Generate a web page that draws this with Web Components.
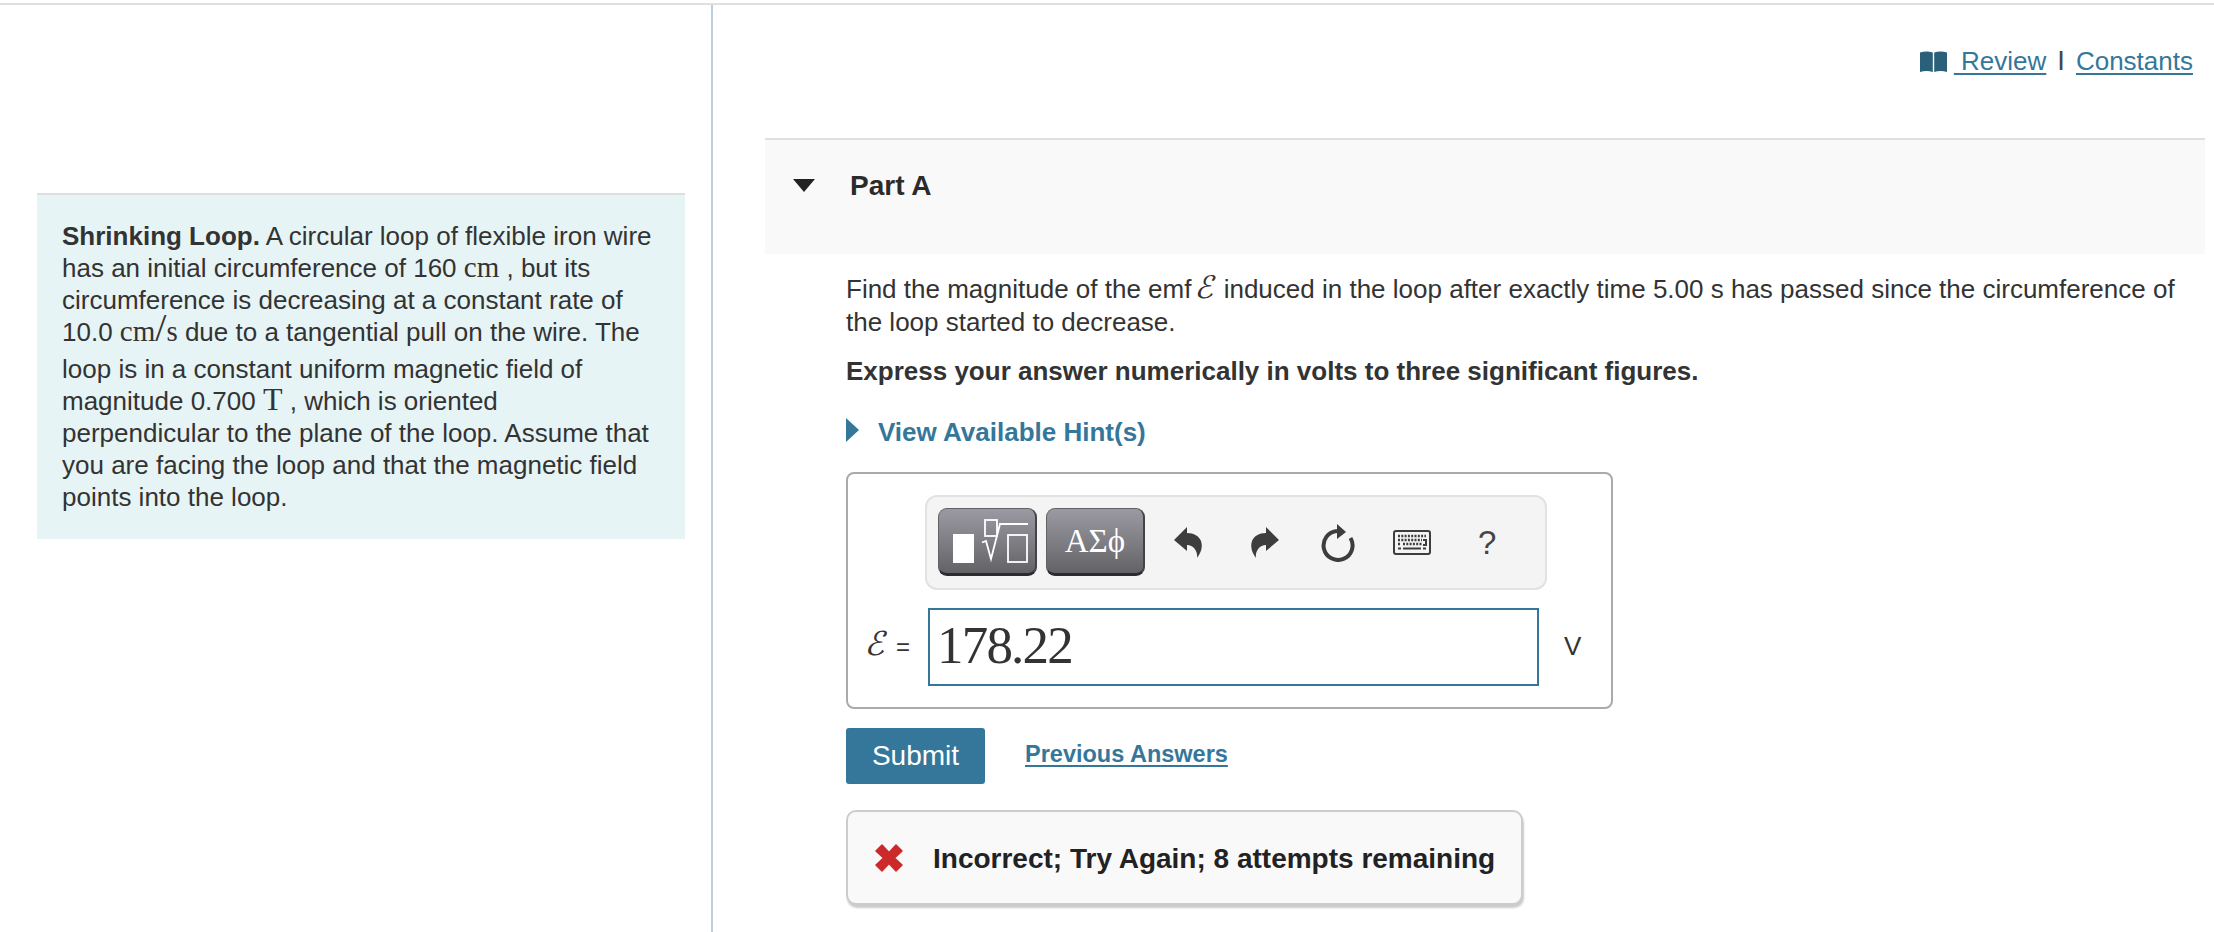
<!DOCTYPE html>
<html><head><meta charset="utf-8"><style>
html,body{margin:0;padding:0;background:#fff}
body{font-family:"Liberation Sans",Arial,sans-serif;font-size:26px;line-height:32.5px;color:#333;height:932px;overflow:hidden}
</style></head><body>
<mp-app>
  <mp-intro slot="left"><b>Shrinking Loop.</b> A circular loop of flexible iron wire has an initial circumference of 160 <mp-math>cm</mp-math> , but its circumference is decreasing at a constant rate of 10.0 <mp-math>cm<mp-slash>/</mp-slash>s</mp-math> due to a tangential pull on the wire. The loop is in a constant uniform magnetic field of magnitude 0.700 <mp-math big>T</mp-math> , which is oriented perpendicular to the plane of the loop. Assume that you are facing the loop and that the magnetic field points into the loop.</mp-intro>
  <mp-links slot="right"></mp-links>
  <mp-part-header slot="right">Part A</mp-part-header>
  <mp-part-body slot="right">
    <mp-para>Find the magnitude of the emf <mp-emf></mp-emf> induced in the loop after exactly time 5.00 s has passed since the circumference of the loop started to decrease.</mp-para>
    <mp-para strong>Express your answer numerically in volts to three significant figures.</mp-para>
    <mp-hint>View Available Hint(s)</mp-hint>
    <mp-answer value="178.22" unit="V"></mp-answer>
    <mp-actions></mp-actions>
    <mp-feedback>Incorrect; Try Again; 8 attempts remaining</mp-feedback>
  </mp-part-body>
</mp-app>
<script>
const def=(name,html,init)=>customElements.define(name,class extends HTMLElement{
  constructor(){super();this.attachShadow({mode:'open'}).innerHTML=html;}
  connectedCallback(){if(init)init(this,this.shadowRoot);}
});
const BLUE='#34779b';
def('mp-app',`<style>
:host{display:block;height:932px;box-sizing:border-box;padding-top:3px}
.wrap{display:grid;grid-template-columns:711px 1fr;height:100%;border-top:2px solid #e0e0e0;box-sizing:border-box}
.l{padding:188px 0 0 37px;box-sizing:border-box}
.r{border-left:2px solid #bccede;padding:0 9px 0 52px;min-width:0}
</style><div class="wrap"><div class="l"><slot name="left"></slot></div><div class="r"><slot name="right"></slot></div></div>`);
def('mp-intro',`<style>
:host{display:block;width:648px;box-sizing:border-box;background:#e7f4f6;border-top:2px solid #dcdfe0;padding:25px 26px 26px 25px;line-height:32px}
</style><slot></slot>`);
def('mp-math',`<style>
:host{display:inline;font-family:"Liberation Serif","DejaVu Serif",serif;font-size:29px;line-height:0}
:host([big]){font-size:32px}
</style><slot></slot>`);
def('mp-slash',`<style>
:host{display:inline;font-size:40px;line-height:0;font-weight:200}
.gap{display:inline-block;height:0;width:0;vertical-align:-12px}
</style><slot></slot><span class="gap"></span>`);
def('mp-emf',`<style>
:host{display:inline-block;font-family:"DejaVu Serif","DejaVu Sans",serif;font-size:31px;line-height:0;transform:skewX(-14deg);margin:0 1px 0 -2px}
</style>ℰ`);
def('mp-links',`<style>
:host{display:block;height:133px;box-sizing:border-box;padding:38px 12px 0 0;text-align:right;font-size:26px}
a{color:${BLUE};text-decoration:underline;text-underline-offset:3px}
svg{vertical-align:-2px;margin-right:7px}
.sep{font-size:20px;margin:0 12px;vertical-align:4px;color:#444;font-weight:bold}
</style><svg width="27" height="21" viewBox="0 0 27 21"><path d="M0 1.500C4 0 9 0 12.800 1.500V21C9 19.600 4 19.600 0 21Z" fill="#2a6079"/><path d="M27 1.500C23 0 18 0 14.200 1.500V21C18 19.600 23 19.600 27 21Z" fill="#2a6079"/></svg><a href="#">&nbsp;Review</a><span class="sep">|</span><a href="#">Constants</a>`);
def('mp-part-header',`<style>
:host{display:flex;align-items:flex-start;height:116px;box-sizing:border-box;background:#f9f9f9;border-top:2px solid #e0e0e0;font-weight:bold;font-size:28px;color:#2b2b2b;padding:30px 0 0 28px}
svg{margin:9px 35px 0 0;flex:none}
</style><svg width="22" height="13" viewBox="0 0 22 13"><path d="M0 0H22L11 13Z" fill="#222"/></svg><slot></slot>`);
def('mp-part-body',`<style>
:host{display:block;padding:19px 0 0 81px}
</style><slot></slot>`);
def('mp-para',`<style>
:host{display:block;margin-bottom:17px}
:host([strong]){font-weight:bold;margin-bottom:29px}
</style><slot></slot>`);
def('mp-hint',`<style>
:host{display:flex;align-items:center;color:${BLUE};font-weight:bold;height:32px;margin-bottom:23px}
svg{margin-right:19px;margin-top:-6px}
</style><svg width="13" height="24" viewBox="0 0 13 24"><path d="M0 0L13 12L0 24Z" fill="${BLUE}"/></svg><slot></slot>`);
def('mp-tool-button',`<style>
:host{display:flex;align-items:center;justify-content:center;width:99px;height:68px;box-sizing:border-box;border-radius:9px;border:1px solid #636367;border-bottom:3px solid #2c2c30;border-right:2px solid #444448;background:linear-gradient(#9b9aa3,#636366);color:#fff}
</style><slot></slot>`);
def('mp-answer',`<style>
:host{display:block;width:767px;height:237px;box-sizing:border-box;border:2px solid #aaa;border-radius:8px;padding:21px 0 0 0}
.tb{display:flex;align-items:center;width:622px;height:95px;box-sizing:border-box;margin-left:77px;background:#f4f4f4;border:2px solid #e2e2e2;border-radius:12px;padding:0 0 0 11px}
.sym{font-family:"Liberation Serif",serif;font-size:33px}
.btns{display:flex;gap:9px}
.tb>svg{flex:none;display:block}
.row{display:flex;align-items:center;margin-top:18px}
.lab{width:80px;box-sizing:border-box;text-align:right;padding-right:18px;white-space:nowrap;font-size:24px;line-height:1}
.lab i{display:inline-block;font-style:normal;font-family:"DejaVu Serif","DejaVu Sans",serif;font-size:33px;margin-right:2px;transform:skewX(-14deg);line-height:0}
.in{width:611px;height:78px;box-sizing:border-box;border:2px solid ${BLUE};font-family:"Liberation Serif",serif;font-size:53px;letter-spacing:-1.800px;line-height:70px;color:#333;padding-left:7px}
.unit{margin-left:25px}
.q{font-size:33px;color:#444;line-height:1;margin-left:47px}
</style>
<div class="tb"><div class="btns">
<mp-tool-button><svg width="96" height="64" viewBox="1 1 96 64" style="display:block"><rect x="15" y="26" width="21" height="29" fill="#fff"/><g fill="none" stroke="#fff" stroke-width="1.800"><rect x="47" y="12" width="12" height="16"/><path d="M44 34.500l4-1.500 5 18 9-35h28"/><rect x="70" y="27" width="19" height="27"/></g></svg></mp-tool-button>
<mp-tool-button><span class="sym">ΑΣϕ</span></mp-tool-button></div>
<svg style="margin-left:29px" width="28" height="31" viewBox="0 0 28 31"><path d="M13 0L0 13L13 24V18C20 18 24 25 23 31C27 26 29 20 27 14C25 9 20 6 13 6Z" fill="#3d3d3d"/></svg>
<svg style="margin-left:49px" width="28" height="31" viewBox="0 0 28 31"><path d="M15 0L28 13L15 24V18C8 18 4 25 5 31C1 26 -1 20 1 14C3 9 8 6 15 6Z" fill="#3d3d3d"/></svg>
<svg style="margin-left:40px" width="38" height="40" viewBox="0 0 38 40"><path d="M31.500 16A14.500 14.500 0 1 1 18 9" fill="none" stroke="#3d3d3d" stroke-width="4"/><path d="M18 2L27 10L18 17Z" fill="#3d3d3d"/></svg>
<svg style="margin-left:36px" width="38" height="25" viewBox="0 0 38 25"><rect x="1" y="1" width="36" height="23" rx="2" fill="#f4f4f4" stroke="#3d3d3d" stroke-width="2"/><path d="M5 6h28M5 10h24M5 14h3M10 14h19" stroke="#3d3d3d" stroke-width="2.400" stroke-dasharray="2 1.300" fill="none"/><path d="M30 10h3v5h-3M5 18.500h3M10 18.500h18M30 18.500h3" stroke="#3d3d3d" stroke-width="2" fill="none"/></svg>
<div class="q">?</div></div>
<div class="row"><div class="lab"><i>ℰ</i> =</div><div class="in"></div><div class="unit"></div></div>`,(el,s)=>{
  s.querySelector('.in').textContent=el.getAttribute('value');
  s.querySelector('.unit').textContent=el.getAttribute('unit');
});
def('mp-actions',`<style>
:host{display:flex;align-items:center;margin-top:19px;height:56px}
button{width:139px;height:56px;border:0;border-radius:3px;background:${BLUE};color:#fff;font:28px "Liberation Sans",sans-serif;padding:0}
a{margin-left:40px;color:${BLUE};font-weight:bold;font-size:23.500px;text-underline-offset:3px;text-decoration-thickness:2px;margin-top:-2px}
</style><button>Submit</button><a href="#">Previous Answers</a>`);
def('mp-feedback',`<style>
:host{display:flex;align-items:center;width:677px;height:95px;box-sizing:border-box;margin-top:26px;background:#f9f9f9;border:2px solid #ccc;border-radius:10px;box-shadow:1px 3px 2px #ccc;font-weight:bold;font-size:28px;color:#222;padding:5px 0 0 27px}
svg{margin-right:30px;flex:none;margin-top:-3px}
</style><svg width="28" height="28" viewBox="0 0 28 28"><path d="M7 1L14 8.500L21 1L27 7L19.500 14L27 21L21 27L14 19.500L7 27L1 21L8.500 14L1 7Z" fill="#cc2a2a" stroke="#cc2a2a" stroke-width="1.500" stroke-linejoin="round"/></svg><slot></slot>`);
</script>
</body></html>
